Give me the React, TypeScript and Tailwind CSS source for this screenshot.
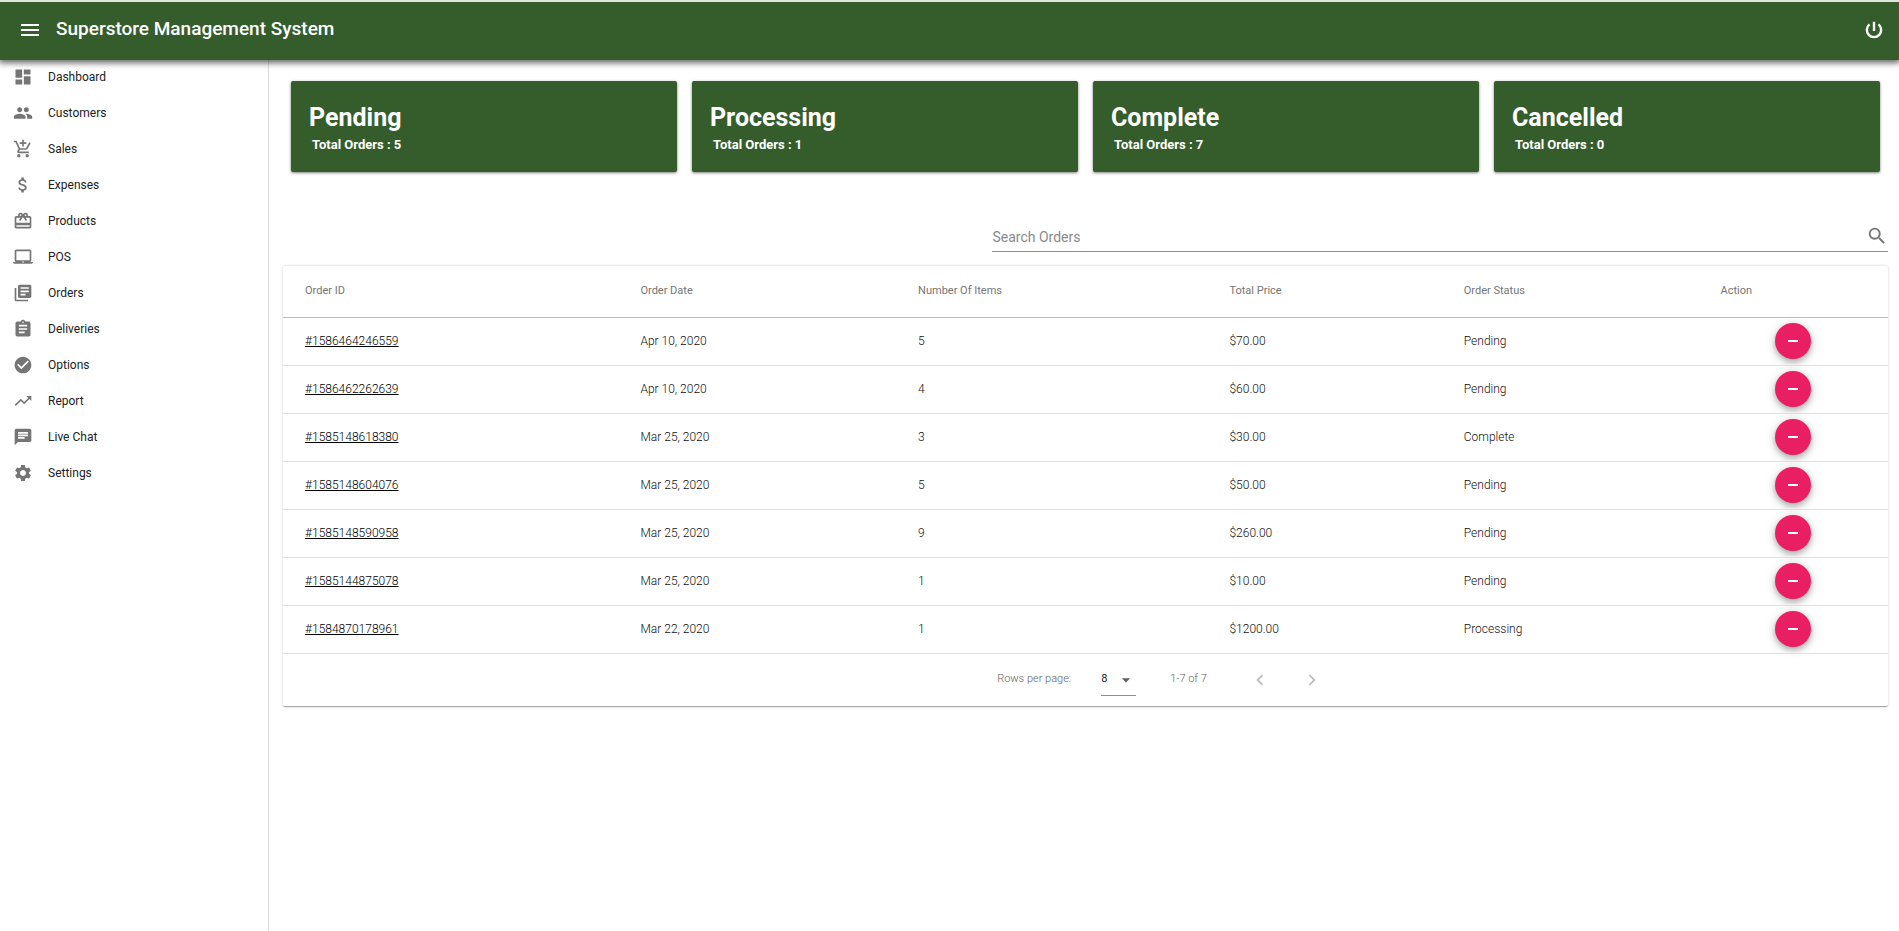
import React from 'react'
import {
  MdAddShoppingCart,
  MdArrowDropDown,
  MdAssignment,
  MdAttachMoney,
  MdCardGiftcard,
  MdChat,
  MdCheckCircle,
  MdChevronLeft,
  MdChevronRight,
  MdDashboard,
  MdLaptopMac,
  MdLibraryBooks,
  MdMenu,
  MdPeople,
  MdSearch,
  MdSettings,
  MdTrendingUp,
} from 'react-icons/md'

const navItems = [
  { label: 'Dashboard', icon: MdDashboard },
  { label: 'Customers', icon: MdPeople },
  { label: 'Sales', icon: MdAddShoppingCart },
  { label: 'Expenses', icon: MdAttachMoney },
  { label: 'Products', icon: MdCardGiftcard },
  { label: 'POS', icon: MdLaptopMac },
  { label: 'Orders', icon: MdLibraryBooks },
  { label: 'Deliveries', icon: MdAssignment },
  { label: 'Options', icon: MdCheckCircle },
  { label: 'Report', icon: MdTrendingUp },
  { label: 'Live Chat', icon: MdChat },
  { label: 'Settings', icon: MdSettings },
]

const summary = [
  { title: 'Pending', total: 5 },
  { title: 'Processing', total: 1 },
  { title: 'Complete', total: 7 },
  { title: 'Cancelled', total: 0 },
]

const columns = [
  { label: 'Order ID', width: 'w-[20.9%]' },
  { label: 'Order Date', width: 'w-[17.3%]' },
  { label: 'Number Of Items', width: 'w-[19.4%]' },
  { label: 'Total Price', width: 'w-[14.6%]' },
  { label: 'Order Status', width: 'w-[16%]' },
  { label: 'Action', width: '' },
]

const orders = [
  { id: '1586464246559', date: 'Apr 10, 2020', items: 5, price: '$70.00', status: 'Pending' },
  { id: '1586462262639', date: 'Apr 10, 2020', items: 4, price: '$60.00', status: 'Pending' },
  { id: '1585148618380', date: 'Mar 25, 2020', items: 3, price: '$30.00', status: 'Complete' },
  { id: '1585148604076', date: 'Mar 25, 2020', items: 5, price: '$50.00', status: 'Pending' },
  { id: '1585148590958', date: 'Mar 25, 2020', items: 9, price: '$260.00', status: 'Pending' },
  { id: '1585144875078', date: 'Mar 25, 2020', items: 1, price: '$10.00', status: 'Pending' },
  { id: '1584870178961', date: 'Mar 22, 2020', items: 1, price: '$1200.00', status: 'Processing' },
]

function PowerIcon() {
  return (
    <svg viewBox="0 0 24 24" className="size-[22px]" fill="none" stroke="currentColor" strokeWidth="2.6">
      <path d="M12 3v10M7.1 5.9a7.8 7.8 0 1 0 9.8 0" />
    </svg>
  )
}

function Header() {
  return (
    <header className="relative z-10 flex h-15 items-center justify-between border-t-2 border-[#dfe5de] bg-[#355d2c] pr-3.5 pb-0.5 pl-[18px] text-white shadow-[0_2px_6px_1px_rgba(0,0,0,0.6)]">
      <div className="flex items-center gap-3.5">
        <button type="button" aria-label="Toggle menu">
          <MdMenu className="size-6" />
        </button>
        <h1 className="pb-0.5 text-[19px] font-medium">Superstore Management System</h1>
      </div>
      <button type="button" aria-label="Sign out">
        <PowerIcon />
      </button>
    </header>
  )
}

function Sidebar() {
  return (
    <nav className="w-[269px] shrink-0 border-r border-[#dcdcdc]">
      <ul className="-mt-px">
        {navItems.map(({ label, icon: Icon }) => (
          <li key={label}>
            <a href="#" className="flex h-9 items-center gap-[15px] pl-[13px] text-xs text-[#212121]">
              <Icon className="size-5 text-[#757575]" />
              {label}
            </a>
          </li>
        ))}
      </ul>
    </nav>
  )
}

function SummaryCards() {
  return (
    <div className="grid grid-cols-4 gap-[15px] px-2">
      {summary.map(({ title, total }) => (
        <section
          key={title}
          className="h-[91px] rounded-xs bg-[#355d2c] px-[18px] pt-[21px] text-white shadow-[0_1px_3px_rgba(0,0,0,0.5)]"
        >
          <h2 className="text-[25px] leading-8 font-bold">{title}</h2>
          <p className="pl-[3px] text-[13px] leading-[22px] font-bold">Total Orders : {total}</p>
        </section>
      ))}
    </div>
  )
}

function SearchBar() {
  return (
    <div className="ml-auto flex h-8 w-[55.8%] items-center border-b border-[#8e8e8e]">
      <input
        type="text"
        aria-label="Search Orders"
        placeholder="Search Orders"
        className="min-w-0 flex-1 pt-0.5 text-sm text-[#212121] outline-none placeholder:text-[#8a8a8a]"
      />
      <button type="button" aria-label="Search">
        <MdSearch className="size-[22px] text-[#757575]" />
      </button>
    </div>
  )
}

function OrdersTable() {
  return (
    <div className="rounded-xs border-b border-[#a8a8a8] shadow-[0_0_3px_rgba(0,0,0,0.2)]">
      <table className="w-full table-fixed text-left text-xs text-[#111]">
        <thead>
          <tr className="h-[51px] border-b border-[#bdbdbd]">
            {columns.map(({ label, width }) => (
              <th key={label} className={`pl-[22px] text-[11px] font-normal text-[#757575] ${width}`}>
                {label}
              </th>
            ))}
          </tr>
        </thead>
        <tbody className="font-light">
          {orders.map(({ id, date, items, price, status }) => (
            <tr key={id} className="h-12 border-b border-[#e0e0e0]">
              <td className="pl-[22px]">
                <a href="#" className="text-black underline">
                  #{id}
                </a>
              </td>
              <td className="pl-[22px]">{date}</td>
              <td className="pl-[22px]">{items}</td>
              <td className="pl-[22px]">{price}</td>
              <td className="pl-[22px]">{status}</td>
              <td>
                <button
                  type="button"
                  aria-label={`Remove order ${id}`}
                  className="mx-auto flex size-9 items-center justify-center rounded-full bg-[#e91e63] text-white shadow-[0_3px_6px_rgba(0,0,0,0.3),0_1px_14px_rgba(0,0,0,0.1)]"
                >
                  <svg viewBox="0 0 18 18" className="size-[18px]" fill="currentColor">
                    <path d="M4 8h10v2H4z" />
                  </svg>
                </button>
              </td>
            </tr>
          ))}
        </tbody>
      </table>
      <Pagination />
    </div>
  )
}

function Pagination() {
  return (
    <div className="flex h-[52px] items-center justify-center pl-[149px] text-[11px] text-[#616161]">
      <label htmlFor="rows" className="font-light">Rows per page:</label>
      <div className="relative ml-[30px] h-8 w-[35px] border-b border-[#8e8e8e]">
        <select id="rows" className="h-full w-full appearance-none text-[#212121] outline-none" defaultValue="8">
          <option>8</option>
          <option>16</option>
        </select>
        <MdArrowDropDown className="pointer-events-none absolute top-1.5 right-0 size-5" />
      </div>
      <span className="ml-[34px] font-light">1-7 of 7</span>
      <button type="button" aria-label="Previous page" className="ml-[42px] text-[#bdbdbd]">
        <MdChevronLeft className="size-[22px]" />
      </button>
      <button type="button" aria-label="Next page" className="ml-[30px] text-[#bdbdbd]">
        <MdChevronRight className="size-[22px]" />
      </button>
    </div>
  )
}

export default function App() {
  return (
    <div className="flex min-h-screen flex-col bg-white font-[Roboto,sans-serif]">
      <Header />
      <div className="flex flex-1">
        <Sidebar />
        <main className="min-w-0 flex-1 pt-[21px] pr-[11px] pl-3.5">
          <SummaryCards />
          <div className="mt-12 mb-3.5">
            <SearchBar />
          </div>
          <OrdersTable />
        </main>
      </div>
    </div>
  )
}
